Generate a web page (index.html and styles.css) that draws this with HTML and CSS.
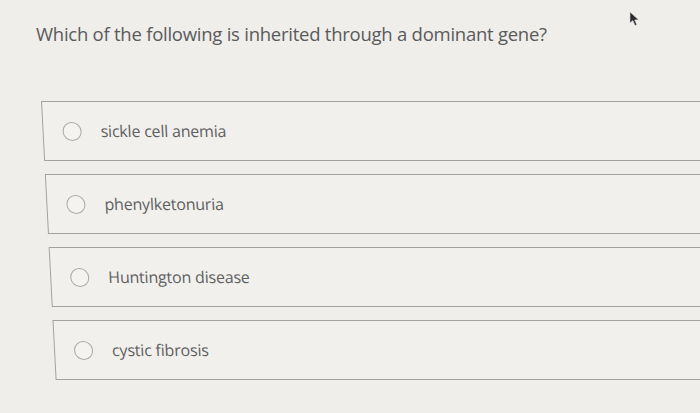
FILE: index.html
```html
<!DOCTYPE html>
<html lang="en">
<head>
<meta charset="utf-8">
<title>Question</title>
<link rel="stylesheet" href="styles.css">
</head>
<body>
<main class="page">
  <h1 class="question">Which of the following is inherited through a dominant gene?</h1>
  <ul class="options">
    <li class="option"><span class="radio"></span><span class="label">sickle cell anemia</span></li>
    <li class="option"><span class="radio"></span><span class="label">phenylketonuria</span></li>
    <li class="option"><span class="radio"></span><span class="label">Huntington disease</span></li>
    <li class="option"><span class="radio"></span><span class="label">cystic fibrosis</span></li>
  </ul>
  <svg class="cursor" width="12" height="16" viewBox="0 0 12 16" aria-hidden="true">
    <path d="M1 1 L1 12 L3.8 9.6 L6 14.5 L7.8 13.7 L5.7 9 L9.5 8.8 Z" fill="#2a2a2e" stroke="#d8d8d8" stroke-width="0.6"/>
  </svg>
</main>
</body>
</html>
```

FILE: styles.css
```css
html, body {
  margin: 0;
  padding: 0;
  background: #efeeea;
  overflow: hidden;
}

.page {
  position: relative;
  width: 700px;
  height: 413px;
  padding: 21px 0 0 36px;
  box-sizing: border-box;
  font-family: "Open Sans", "Noto Sans", sans-serif;
  overflow: hidden;
}

.question {
  margin: 0;
  font-size: 18.5px;
  font-weight: 400;
  line-height: 26px;
  color: #5a5a5c;
  letter-spacing: -0.25px;
}

.options {
  list-style: none;
  margin: 54px 0 0 5px;
  padding: 0;
  display: flex;
  flex-direction: column;
  gap: 13px;
  width: 680px;
  transform: skewX(3deg);
  transform-origin: 0 0;
}

.option {
  display: flex;
  align-items: center;
  height: 60px;
  box-sizing: border-box;
  border: 1.5px solid #a2a2a2;
  background: #f1f0ec;
  padding-left: 19px;
  gap: 19px;
}

.radio {
  width: 17px;
  height: 17px;
  border: 1.6px solid #a9a9a9;
  border-radius: 50%;
  background: #f4f3ef;
  flex: none;
}

.label {
  font-size: 16px;
  color: #606062;
  letter-spacing: -0.2px;
}

.cursor {
  position: absolute;
  left: 629px;
  top: 11px;
}
```
